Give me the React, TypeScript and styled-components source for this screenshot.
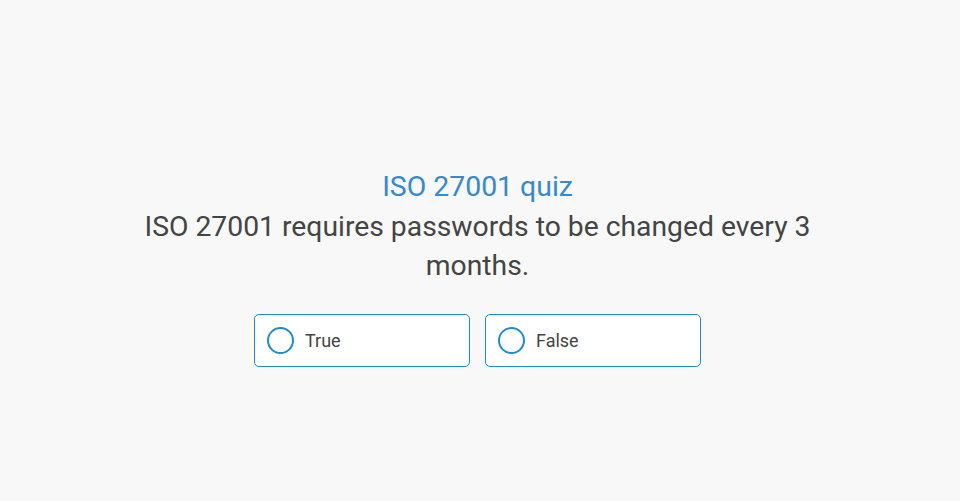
import React from 'react';
import styled, { createGlobalStyle } from 'styled-components';

const GlobalStyle = createGlobalStyle`
  html, body {
    margin: 0;
    padding: 0;
    background: #f8f8f8;
    font-family: Roboto, "Liberation Sans", Arial, sans-serif;
  }
`;

const Page = styled.div`
  min-height: 501px;
  display: flex;
  flex-direction: column;
  align-items: center;
  padding: 170px 5px 0 0;
  box-sizing: border-box;
`;

const Title = styled.h1`
  margin: 0;
  font-size: 28.4px;
  font-weight: 400;
  line-height: 34px;
  color: #3589cf;
`;

const Question = styled.p`
  margin: 3px 0 0;
  width: 700px;
  text-align: center;
  font-size: 28.3px;
  font-weight: 400;
  line-height: 39px;
  color: #444444;
`;

const Options = styled.div`
  display: flex;
  gap: 15px;
  margin-top: 29px;
`;

const Option = styled.button`
  width: 216px;
  height: 53px;
  display: flex;
  align-items: center;
  gap: 11px;
  padding: 0 12px;
  background: #ffffff;
  border: 1.5px solid #1f8dcb;
  border-radius: 5px;
  font-family: inherit;
  font-size: 18px;
  color: #444444;
  cursor: pointer;
  box-sizing: border-box;
`;

const Radio = styled.span`
  width: 27px;
  height: 27px;
  border: 2px solid #1f8dcb;
  border-radius: 50%;
  flex-shrink: 0;
  box-sizing: border-box;
`;

const answers = ['True', 'False'];

export default function App() {
  return (
    <>
      <GlobalStyle />
      <Page>
        <Title>ISO 27001 quiz</Title>
        <Question>ISO 27001 requires passwords to be changed every 3 months.</Question>
        <Options>
          {answers.map((a) => (
            <Option key={a}>
              <Radio />
              {a}
            </Option>
          ))}
        </Options>
      </Page>
    </>
  );
}
